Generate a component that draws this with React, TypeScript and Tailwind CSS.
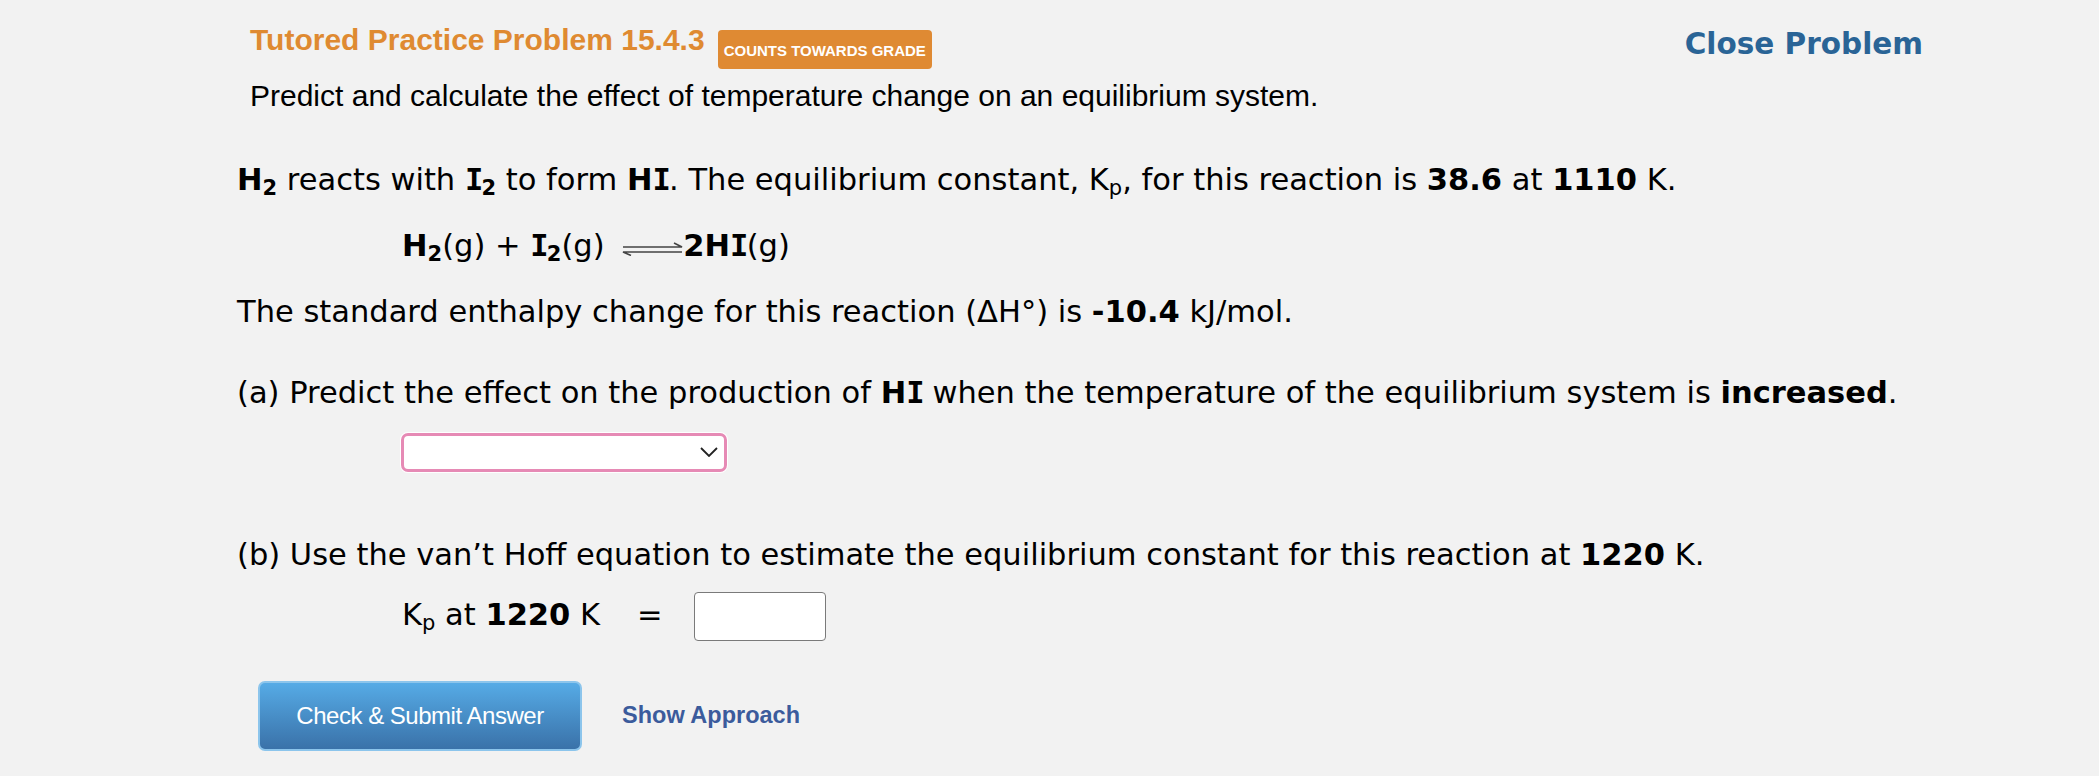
import React from 'react';

const Sub = ({ children }: { children: React.ReactNode }) => (
  <span className="relative top-[5px] text-[21px] leading-none">{children}</span>
);

// Verdana's bold I has serifs; DejaVu Sans Mono's does too
const SerifI = () => (
  <span className="font-['DejaVu_Sans_Mono',monospace] tracking-[-1.8px]">I</span>
);

const EqArrow = () => (
  <svg width="61" height="16" viewBox="0 0 61 16" className="ml-[8px] inline-block align-baseline">
    <path d="M1 7 H60 L52 3" fill="none" stroke="#444" strokeWidth="1.6" />
    <path d="M60 12 H1 L9 15.5" fill="none" stroke="#444" strokeWidth="1.6" />
  </svg>
);

const App: React.FC = () => {
  return (
    <div className="min-h-screen w-full bg-[#f2f2f2] font-['DejaVu_Sans',Verdana,sans-serif] text-black">
      <div className="pl-[237px] pr-[176px] pt-[22px]">
        {/* header */}
        <div className="flex h-[57.6px] items-start justify-between pl-[13px]">
          <div className="flex items-start">
            <h1 className="font-['Liberation_Sans',Arial,sans-serif] text-[30px] leading-[36px] font-bold text-[#df8a31]">
              Tutored Practice Problem 15.4.3
            </h1>
            <span className="ml-[13px] mt-[8px] flex h-[39px] items-center rounded-[4px] bg-[#df8a33] px-[6px] pt-[3px] font-['Liberation_Sans',Arial,sans-serif] text-[15px] font-bold text-white">
              COUNTS TOWARDS GRADE
            </span>
          </div>
          <a className="mt-[4px] text-[29.5px] leading-[36px] font-bold text-[#2a6496] cursor-pointer">Close Problem</a>
        </div>
        <p className="pl-[13px] font-['Liberation_Sans',Arial,sans-serif] text-[30px] leading-[32px]">
          Predict and calculate the effect of temperature change on an equilibrium system.
        </p>

        {/* problem body */}
        <div className="text-[30.5px] leading-[36px]">
          <p className="mt-[50px]">
            <b>H<Sub>2</Sub></b> reacts with <b><SerifI /><Sub>2</Sub></b> to form <b>H<SerifI /></b>. The equilibrium constant, K<Sub>p</Sub>, for this reaction is <b>38.6</b> at <b>1110</b> K.
          </p>
          <p className="mt-[30px] pl-[165px]">
            <b>H<Sub>2</Sub></b>(g) + <b><SerifI /><Sub>2</Sub></b>(g) <EqArrow /><b>2H<SerifI /></b>(g)
          </p>
          <p className="mt-[30px]">
            The standard enthalpy change for this reaction (ΔH°) is <b>-10.4</b> kJ/mol.
          </p>
          <p className="mt-[45px]">
            (a) Predict the effect on the production of <b>H<SerifI /></b> when the temperature of the equilibrium system is <b>increased</b>.
          </p>
          <div className="ml-[164px] mt-[22.4px] flex h-[39px] w-[326px] items-center justify-end rounded-[7px] border-[3px] border-[#e68ab5] bg-white pr-[6px] shadow-[0_0_0_1px_#ffffff]">
            <svg width="18" height="10" viewBox="0 0 18 10">
              <path d="M1 1 L9 9 L17 1" fill="none" stroke="#222" strokeWidth="1.8" />
            </svg>
          </div>
          <p className="mt-[64.6px]">
            (b) Use the van’t Hoff equation to estimate the equilibrium constant for this reaction at <b>1220</b> K.
          </p>
          <div className="mt-[19.4px] flex h-[49px] items-start pl-[165px]">
            <span className="mt-[5px]">K<Sub>p</Sub> at <b>1220</b> K</span>
            <span className="ml-[37px] mt-[5px]">=</span>
            <input
              type="text"
              className="ml-[31px] h-[49px] w-[132px] rounded-[4px] border-[1.5px] border-[#7a7a7a] bg-white outline-none"
            />
          </div>
        </div>

        {/* actions */}
        <div className="mt-[40px] flex items-center pl-[21px]">
          <button className="h-[70px] w-[324px] rounded-[7px] border-2 border-[#8cc5ec] bg-gradient-to-b from-[#56abe6] to-[#3a72a9] font-['Liberation_Sans',Arial,sans-serif] text-[24px] tracking-[-0.02em] text-white">
            Check &amp; Submit Answer
          </button>
          <a className="ml-[40px] font-['Liberation_Sans',Arial,sans-serif] text-[23.5px] font-bold text-[#3b5b9c] cursor-pointer">
            Show Approach
          </a>
        </div>
      </div>
    </div>
  );
};

export default App;
